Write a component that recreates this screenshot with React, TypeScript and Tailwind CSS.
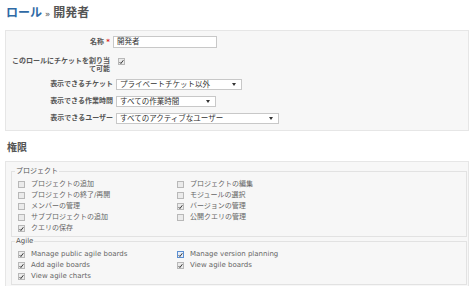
import React from "react";

const FONT = '"DejaVu Sans", Verdana, "Noto Sans CJK JP", sans-serif';

function Check({ checked, focus }: { checked?: boolean; focus?: boolean }) {
  return (
    <span
      className={
        "flex items-center justify-center w-[7px] h-[7px] shrink-0 border " +
        (focus ? "border-[#5b8fd1] bg-[#e6eefa]" : "border-[#b8b8b8] bg-[#ebebeb]")
      }
    >
      {checked && (
        <svg width="6" height="6" viewBox="0 0 6 6">
          <path d="M0.8 3.2 L2.3 4.8 L5.2 0.9" stroke="#333" strokeWidth="1.2" fill="none" />
        </svg>
      )}
    </span>
  );
}

function Select({ w, text }: { w: string; text: string }) {
  return (
    <div className={"h-[11px] border border-[#c8c8c8] bg-white flex items-center pl-[3px] pr-[5px] " + w}>
      <span className="flex-1 text-[7.5px] leading-none text-[#333]">{text}</span>
      <svg width="4" height="3" viewBox="0 0 4 3">
        <path d="M0 0 L4 0 L2 3 Z" fill="#333" />
      </svg>
    </div>
  );
}

function Perm({ label, checked, focus }: { label: string; checked?: boolean; focus?: boolean }) {
  return (
    <div className="flex items-center h-[11px] gap-[6px] pl-[6px]">
      <Check checked={checked} focus={focus} />
      <span className="text-[7px] leading-none text-[#666]">{label}</span>
    </div>
  );
}

export default function App() {
  return (
    <div className="w-[474px] h-[286px] overflow-hidden bg-white" style={{ fontFamily: FONT }}>
      <div className="flex items-baseline pl-[6px] pt-[7px] h-[23px]">
        <span className="text-[12px] font-bold text-[#2f6aa5] leading-none">ロール</span>
        <span className="text-[8px] font-bold text-[#777] leading-none mx-[3px]">»</span>
        <span className="text-[12px] font-bold text-[#555] leading-none">開発者</span>
      </div>
      <div className="mx-[5px] mt-[7px] border border-[#e6e6e6] bg-[#f7f7f7] pt-[5px] pb-[6px] flex flex-col">
        <div className="flex items-center h-[12px]">
          <div className="w-[107px] text-right text-[7px] font-bold text-[#555] pr-[3px]">
            名称 <span className="text-[#d22]">*</span>
          </div>
          <div className="w-[104px] h-[12px] border border-[#c8c8c8] bg-white flex items-center pl-[3px]">
            <span className="text-[7.5px] leading-none text-[#333]">開発者</span>
          </div>
        </div>
        <div className="flex items-start mt-[9px] h-[16px]">
          <div className="w-[107px] pl-[6px] pr-[3px] text-right text-[7px] leading-[8px] font-bold text-[#555]">
            このロールにチケットを割り当て可能
          </div>
          <div className="flex pt-[1px] pl-[5px]">
            <Check checked />
          </div>
        </div>
        {[
          ["表示できるチケット", "w-[126px]", "プライベートチケット以外"],
          ["表示できる作業時間", "w-[100px]", "すべての作業時間"],
          ["表示できるユーザー", "w-[163px]", "すべてのアクティブなユーザー"],
        ].map(([l, w, t], i) => (
          <div key={i} className="flex items-center mt-[6px] h-[11px]">
            <div className="w-[110px] text-right text-[7px] font-bold text-[#555] pr-[3px]">{l}</div>
            <Select w={w} text={t} />
          </div>
        ))}
      </div>
      <div className="pl-[7px] pt-[11px] h-[30px] text-[10px] font-bold text-[#555] leading-[12px]">権限</div>
      <div className="mx-[5px] border border-[#e6e6e6] bg-[#f7f7f7] pt-[5px] pl-[5px] pr-[1px] pb-[4px]">
        <fieldset className="border border-[#e2e2e2] pb-[2px]">
          <legend className="ml-[3px] px-[1px] text-[7px] leading-[9px] text-[#555]">プロジェクト</legend>
          <div className="grid grid-cols-[159px_1fr] pt-[3px]">
            <Perm label="プロジェクトの追加" />
            <Perm label="プロジェクトの編集" />
            <Perm label="プロジェクトの終了/再開" />
            <Perm label="モジュールの選択" />
            <Perm label="メンバーの管理" />
            <Perm label="バージョンの管理" checked />
            <Perm label="サブプロジェクトの追加" />
            <Perm label="公開クエリの管理" />
            <Perm label="クエリの保存" checked />
          </div>
        </fieldset>
        <fieldset className="border border-[#e2e2e2] mt-[0px] pb-[2px]">
          <legend className="ml-[3px] px-[1px] text-[7px] leading-[9px] text-[#555]">Agile</legend>
          <div className="grid grid-cols-[159px_1fr] pt-[3px]">
            <Perm label="Manage public agile boards" checked />
            <Perm label="Manage version planning" checked focus />
            <Perm label="Add agile boards" checked />
            <Perm label="View agile boards" checked />
            <Perm label="View agile charts" checked />
          </div>
        </fieldset>
      </div>
    </div>
  );
}
